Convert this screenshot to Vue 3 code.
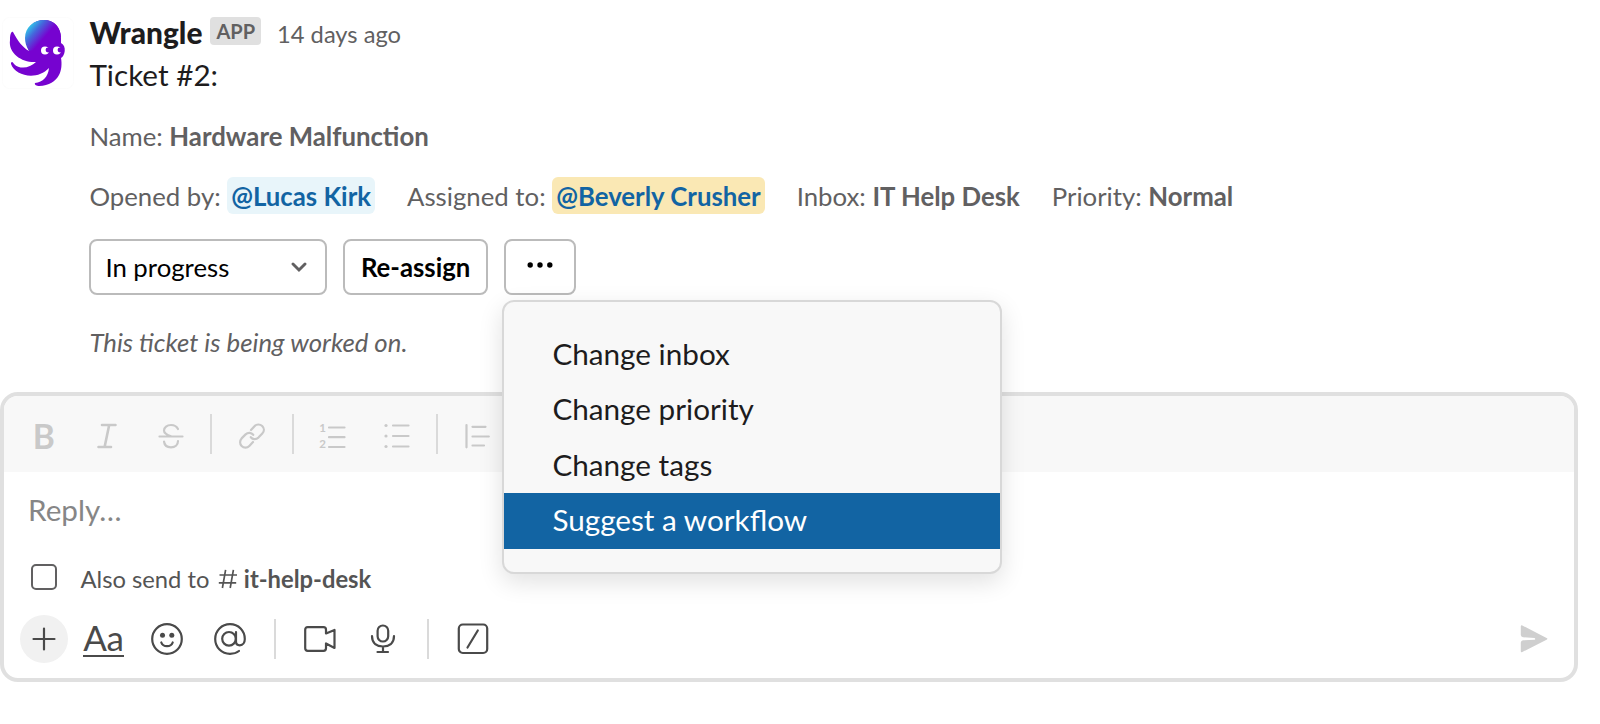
<template>
  <div class="thread">
    <div class="message">
      <svg class="avatar" viewBox="0 0 72 72">
        <defs>
          <linearGradient id="head" x1="0.08" y1="0.2" x2="0.55" y2="0.55">
            <stop offset="0" stop-color="#2fd0ea" />
            <stop offset="0.45" stop-color="#4468dc" />
            <stop offset="1" stop-color="#7603d0" />
          </linearGradient>
        </defs>
        <rect x="0.5" y="0.5" width="71" height="71" rx="7" fill="#fff" stroke="#fcfcfc" />
        <path
          d="M11 15C16 24 20 30 27 34C26 30 24 26 24 22C24 10 32 3 42 3C53 3 59 11 59 21V26C65 29 63 39 59 41C61 52 58 68 37 69C35 69 32 68 33 66C41 65 46 60 47 51C35 64 13 59 9 47C9 45 10 44 12 47C18 53 28 51 34 45C21 46 6 37 8 23C8 18 9 14 11 15Z"
          fill="#7603d0"
        />
        <path
          d="M27 34C24 29 23 25 23 21C23 10 32 3 42 3C51 3 58 9 59 20C50 25 38 32 27 34Z"
          fill="url(#head)"
        />
        <circle cx="43" cy="33.5" r="4" fill="#fff" />
        <circle cx="46" cy="33" r="2.4" fill="#7603d0" />
        <circle cx="55" cy="33.5" r="4" fill="#fff" />
        <circle cx="58" cy="33" r="2.4" fill="#7603d0" />
      </svg>

      <div class="content">
        <div class="header">
          <span class="sender">Wrangle</span>
          <span class="badge">APP</span>
          <span class="time">14 days ago</span>
        </div>
        <div class="ticket">Ticket #2:</div>
        <div class="row name">Name:&nbsp;<b>Hardware Malfunction</b></div>
        <div class="row fields">
          <span>Opened by: <b class="mention">@Lucas Kirk</b></span>
          <span>Assigned to: <b class="mention me">@Beverly Crusher</b></span>
          <span>Inbox: <b>IT Help Desk</b></span>
          <span>Priority: <b>Normal</b></span>
        </div>

        <div class="actions">
          <button class="btn select">
            <span>{{ status }}</span>
            <svg width="16" height="12" viewBox="0 0 16 12">
              <path d="M2 3L8 9L14 3" class="chevron" />
            </svg>
          </button>
          <button class="btn reassign">Re-assign</button>
          <div class="more-wrap">
            <button class="btn more" @click="menuOpen = !menuOpen">
              <svg width="26" height="6" viewBox="0 0 26 6">
                <circle cx="3.2" cy="3" r="2.7" />
                <circle cx="13" cy="3" r="2.7" />
                <circle cx="22.8" cy="3" r="2.7" />
              </svg>
            </button>
            <!-- overflow menu -->
            <div v-if="menuOpen" class="menu">
              <div
                v-for="item in menuItems"
                :key="item"
                class="menu-item"
                :class="{ active: item === activeItem }"
                @mouseenter="activeItem = item"
              >
                {{ item }}
              </div>
            </div>
          </div>
        </div>

        <div class="note">This ticket is being worked on.</div>
      </div>
    </div>

    <div class="composer">
      <div class="format-bar">
        <span class="cell bold">B</span>
        <span class="cell">
          <svg viewBox="0 0 32 32" class="heavy">
            <path d="M11 5H24.5M7.5 27H20M18.2 5L13.6 27" />
          </svg>
        </span>
        <span class="cell">
          <svg viewBox="0 0 32 32">
            <path d="M4.5 16.5H27.5M23 9C21.5 6 19 5 16 5C12 5 9 7.5 9 10.5C9 13.5 12 15 16 16.4M9 21.5C9.5 25.5 12.5 27.3 16 27.3C20 27.3 23 25 23 21" />
          </svg>
        </span>
        <span class="divider"></span>
        <span class="cell">
          <svg viewBox="0 0 32 32">
            <path d="M15 10L18.5 6.2C20.5 4 24 4 26.2 6C28.4 8.2 28.4 11.4 26.3 13.6L22.4 17.6C20 19.8 16.6 19.5 14.8 17.2M17 22L13.3 26C11.2 28.2 7.8 28.2 5.6 26C3.6 24 3.6 20.6 5.6 18.4L9.6 14.4C12 12.2 15.4 12.5 17.2 14.8" />
          </svg>
        </span>
        <span class="divider"></span>
        <span class="cell">
          <svg viewBox="0 0 32 32">
            <text x="2.2" y="11.6" class="digit">1</text>
            <text x="2.2" y="27.8" class="digit">2</text>
            <path d="M12 7.5H27.5M12 17.2H27.5M12 27H27.5" />
          </svg>
        </span>
        <span class="cell">
          <svg viewBox="0 0 32 32">
            <path d="M12 5.5H27.5M12 16H27.5M12 26.5H27.5" />
            <g class="dots">
              <circle cx="5" cy="5.5" r="1.6" />
              <circle cx="5" cy="16" r="1.6" />
              <circle cx="5" cy="26.5" r="1.6" />
            </g>
          </svg>
        </span>
        <span class="divider"></span>
        <span class="cell">
          <svg viewBox="0 0 32 32">
            <path d="M4.5 5V27.3M10.5 6.8H23.5M10.5 16.5H26.8M10.5 25.5H22" />
          </svg>
        </span>
      </div>

      <div class="reply">Reply…</div>

      <label class="also-send">
        <span class="checkbox"></span>
        <span>Also send to</span>
        <svg class="hash" width="20" height="20" viewBox="0 0 20 20">
          <path d="M1.5 6H19M0.8 13.8H18.2M7.6 0.8L4.4 19M15.4 0.8L12.2 19" />
        </svg>
        <b>it-help-desk</b>
      </label>

      <div class="tool-bar">
        <span class="cell">
          <span class="plus">
            <svg viewBox="0 0 32 32"><path d="M5.5 16H26.5M16 5.5V26.5" /></svg>
          </span>
        </span>
        <span class="cell aa"><span>Aa</span></span>
        <span class="cell">
          <svg viewBox="0 0 32 32">
            <circle cx="16" cy="16" r="14.8" />
            <path d="M10.3 19.5C12 24.4 20 24.4 21.7 19.5" />
            <g class="dots">
              <circle cx="11.5" cy="12.3" r="2.5" />
              <circle cx="20.8" cy="12.3" r="2.5" />
            </g>
          </svg>
        </span>
        <span class="cell">
          <svg viewBox="0 0 32 32">
            <circle cx="15" cy="15.8" r="6.8" />
            <path d="M22 9V18.5C22 21 23.5 22.3 25.8 22.3C29 22.3 30.8 19.5 30.8 16C30.8 7.7 24.5 1.2 16 1.2C7.7 1.2 1.2 7.7 1.2 16C1.2 24.3 7.7 30.8 16 30.8C19.5 30.8 22.5 30 25 28" />
          </svg>
        </span>
        <span class="divider"></span>
        <span class="cell">
          <svg viewBox="0 0 32 32">
            <path d="M3.7 4.2H19.5Q22 4.2 22 6.7V10.5L30.5 7V25L22 20.5V25.3Q22 27.8 19.5 27.8H3.7Q1.2 27.8 1.2 25.3V6.7Q1.2 4.2 3.7 4.2Z" />
          </svg>
        </span>
        <span class="cell">
          <svg viewBox="0 0 32 32">
            <rect x="10.6" y="2.5" width="10.6" height="16" rx="5.3" />
            <path d="M5 13C5 20.5 10 23.5 16 23.5C22 23.5 27 20.5 27 13M16 23.5V29M10.5 29H21" />
          </svg>
        </span>
        <span class="divider"></span>
        <span class="cell">
          <svg viewBox="0 0 32 32">
            <rect x="1.8" y="1.5" width="28.4" height="28.5" rx="4" />
            <path d="M20.8 7.5L10.5 24.5" />
          </svg>
        </span>
        <svg class="send" width="28" height="28" viewBox="0 0 28 28">
          <path d="M0.8 1.2Q1 0 2.3 0.5L27 13.2Q27.8 13.8 27 14.4L2.3 27Q1 27.6 0.8 26.4V17.5Q1 15.5 3 15.3L14.5 14.7Q16 14 14.5 12.9L3 12.3Q1 12.1 0.8 10.1Z" />
        </svg>
      </div>
    </div>
  </div>
</template>

<script setup>
import { ref } from 'vue';

const status = ref('In progress');
const menuOpen = ref(true);
const menuItems = [
  'Change inbox',
  'Change priority',
  'Change tags',
  'Suggest a workflow',
];
const activeItem = ref('Suggest a workflow');
</script>

<style>
body {
  background: #fff;
}
</style>

<style scoped>
.thread {
  width: 1578px;
  height: 724px;
  font-family: Lato, sans-serif;
  color: #1d1c1d;
}

.thread * {
  box-sizing: border-box;
}

/* message */
.message {
  display: flex;
  height: 392px;
  padding: 17px 0 0 2px;
}

.avatar {
  width: 72px;
  height: 72px;
  margin-right: 15.4px;
  flex: none;
}

.header {
  display: flex;
  height: 38px;
}

.sender {
  font-size: 29.9px;
  font-weight: 900;
  line-height: 30px;
}

.badge {
  height: 28px;
  margin: 0 16px 0 8px;
  padding: 0 6px;
  border-radius: 4px;
  background: #e0e0e0;
  color: #616061;
  font-size: 20px;
  font-weight: 700;
  line-height: 28px;
}

.time {
  color: #616061;
  font-size: 23.7px;
  line-height: 34px;
}

.ticket {
  height: 60px;
  font-size: 29.7px;
  line-height: 40px;
}

.row {
  display: flex;
  align-items: center;
  height: 41px;
  color: #616061;
  font-size: 25.77px;
  line-height: 38px;
}

.fields {
  height: 38px;
  margin-top: 20.5px;
  gap: 32px;
  white-space: nowrap;
}

.mention {
  display: inline-block;
  height: 37px;
  padding: 0 4px;
  border-radius: 6px;
  background: #e8f5fa;
  color: #1264a3;
}

.mention.me {
  background: #fae8b4;
}

.actions {
  display: flex;
  gap: 16px;
  margin-top: 24.5px;
}

.btn {
  height: 56px;
  padding: 0;
  border: 2px solid #bbb;
  border-radius: 8px;
  background: #fff;
  color: #000;
  font-family: inherit;
  font-size: 25.75px;
}

.select {
  display: flex;
  align-items: center;
  justify-content: space-between;
  width: 238px;
  padding: 0 18px 0 14px;
}

.chevron {
  fill: none;
  stroke: #616061;
  stroke-width: 2.9;
  stroke-linecap: round;
}

.reassign {
  width: 144.5px;
  padding-bottom: 1px;
  font-weight: 700;
}

.more-wrap {
  position: relative;
}

.more {
  width: 72px;
}

.more svg {
  display: block;
  margin: -4px auto 0;
}

.menu {
  position: absolute;
  z-index: 2;
  top: 61px;
  left: -2px;
  width: 500px;
  height: 274px;
  padding: 24.5px 0;
  border: 2px solid #d8d8d8;
  border-radius: 12px;
  background: #f8f8f8;
  box-shadow: 0 8px 24px rgba(0, 0, 0, 0.12);
}

.menu-item {
  height: 55.6px;
  padding-left: 48.5px;
  color: #1d1c1d;
  font-size: 29.7px;
  line-height: 53px;
}

.menu-item.active {
  background: #1264a3;
  color: #fff;
}

.note {
  margin-top: 28px;
  color: #616061;
  font-size: 25.75px;
  font-style: italic;
  line-height: 36px;
}

/* composer */
.composer {
  height: 290px;
  overflow: hidden;
  border: 4px solid #e0e0e0;
  border-radius: 18px;
}

.format-bar,
.tool-bar {
  display: flex;
  align-items: center;
  padding-left: 8px;
}

.format-bar {
  height: 76px;
  background: #f8f8f8;
}

.cell {
  display: flex;
  flex: none;
  align-items: center;
  justify-content: center;
  width: 63.5px;
}

.format-bar .cell {
  padding-top: 4px;
}

.cell svg {
  width: 32px;
  height: 32px;
  fill: none;
  stroke: #4a4a4a;
  stroke-width: 2.2;
  stroke-linecap: round;
  stroke-linejoin: round;
}

.format-bar .cell svg {
  stroke: #c9c9c9;
}

.cell svg.heavy {
  stroke-width: 2.6;
}

.bold {
  color: #c9c9c9;
  font-size: 33.5px;
  font-weight: 700;
  line-height: 40px;
}

.digit {
  fill: #c9c9c9;
  stroke: none;
  font-size: 11.5px;
  font-weight: 700;
}

.dots {
  fill: #4a4a4a;
  stroke: none;
}

.format-bar .dots {
  fill: #c9c9c9;
}

.divider {
  display: flex;
  justify-content: center;
  flex: none;
  width: 17.8px;
}

.divider::before {
  content: '';
  width: 2px;
  height: 40px;
  background: #dadada;
}

.tool-bar .divider {
  width: 26px;
}

.reply {
  padding: 18px 0 0 24px;
  color: #868686;
  font-size: 29.7px;
  line-height: 40px;
}

.also-send {
  display: flex;
  align-items: center;
  height: 36px;
  margin-top: 31px;
  padding-left: 27px;
  color: #545454;
  font-size: 23.75px;
}

.checkbox {
  width: 26px;
  height: 26px;
  margin: -4px 23.5px 0 0;
  border: 2px solid #616061;
  border-radius: 5px;
}

.hash {
  margin: 0 6px 0 8.5px;
  fill: none;
  stroke: #545454;
  stroke-width: 1.7;
}

.tool-bar {
  height: 50px;
  margin-top: 16.5px;
}

.plus {
  display: flex;
  align-items: center;
  justify-content: center;
  width: 48px;
  height: 48px;
  border-radius: 50%;
  background: #f1f1f1;
}

.aa {
  width: 59.6px;
  padding-right: 4px;
}

.aa span {
  width: 41px;
  height: 37px;
  border-bottom: 2.5px solid #4a4a4a;
  color: #4a4a4a;
  font-size: 35px;
  letter-spacing: -0.5px;
  line-height: 34px;
  text-align: center;
}

.send {
  margin-left: auto;
  margin-right: 26px;
  fill: #cfcfcf;
}
</style>
